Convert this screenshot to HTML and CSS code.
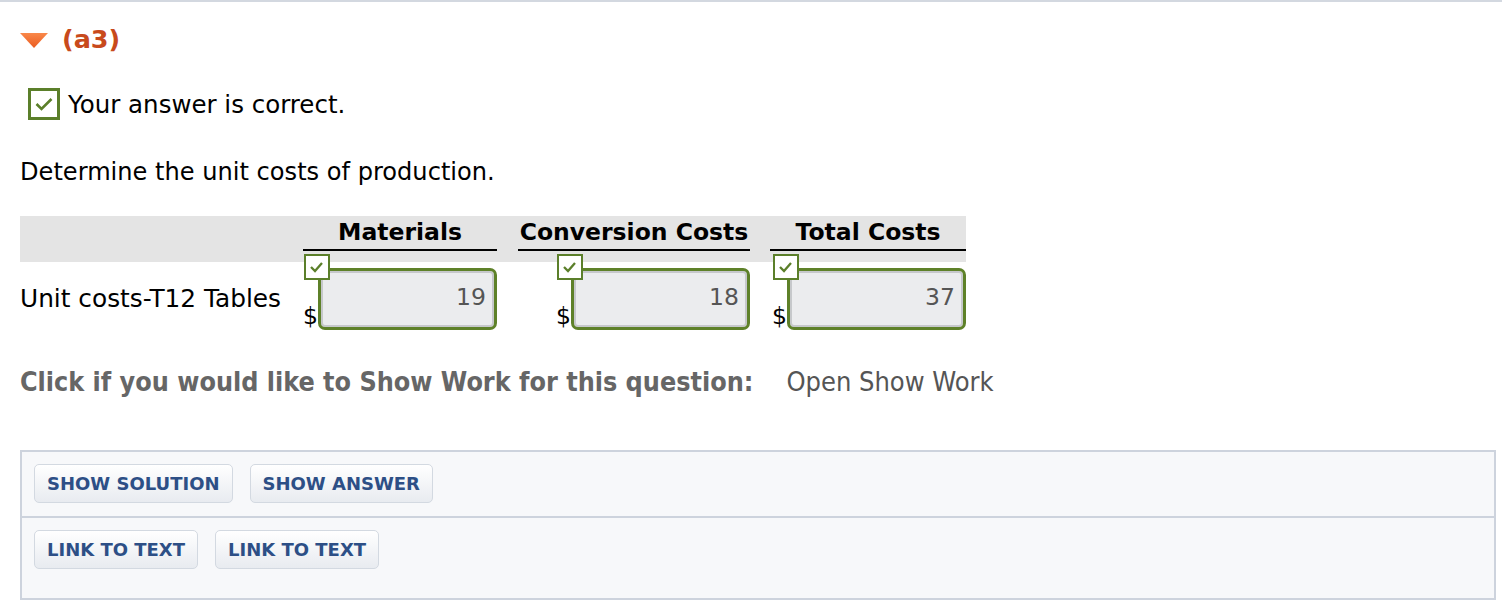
FILE: index.html
```html
<!DOCTYPE html>
<html>
<head>
<meta charset="utf-8">
<link rel="stylesheet" href="styles.css">
</head>
<body>
<div class="page">
  <div class="part-head">
    <svg class="toggle" width="28" height="15" viewBox="0 0 28 15">
      <defs>
        <linearGradient id="og" x1="0" y1="0" x2="0" y2="1">
          <stop offset="0" stop-color="#f9884a"/>
          <stop offset="1" stop-color="#ea5b1f"/>
        </linearGradient>
      </defs>
      <polygon points="0,0 28,0 14,15" fill="url(#og)"/>
    </svg>
    <span class="part-label">(a3)</span>
  </div>

  <div class="correct">
    <span class="check big">
      <svg width="26" height="26" viewBox="0 0 26 26"><polyline points="5.5,13 10.5,18 20.5,8" fill="none" stroke="#5b7f2a" stroke-width="2.6"/></svg>
    </span>
    <span>Your answer is correct.</span>
  </div>

  <p class="prompt">Determine the unit costs of production.</p>

  <div class="grid">
    <div class="head-band">
      <div class="hcell"></div>
      <div class="hcell col"><span class="hlabel w-mat">Materials</span></div>
      <div class="hcell col"><span class="hlabel w-conv">Conversion Costs</span></div>
      <div class="hcell col"><span class="hlabel w-tot">Total Costs</span></div>
    </div>
    <div class="body-row">
      <div class="row-label">Unit costs-T12 Tables</div>
      <div class="cell">
        <div class="field">
          <span class="check small"><svg width="22" height="22" viewBox="0 0 22 22"><polyline points="5,11 9,15 16,7" fill="none" stroke="#5b7f2a" stroke-width="2.3"/></svg></span>
          <span class="dollar">$</span><span class="input">19</span>
        </div>
      </div>
      <div class="cell">
        <div class="field">
          <span class="check small"><svg width="22" height="22" viewBox="0 0 22 22"><polyline points="5,11 9,15 16,7" fill="none" stroke="#5b7f2a" stroke-width="2.3"/></svg></span>
          <span class="dollar">$</span><span class="input">18</span>
        </div>
      </div>
      <div class="cell">
        <div class="field">
          <span class="check small"><svg width="22" height="22" viewBox="0 0 22 22"><polyline points="5,11 9,15 16,7" fill="none" stroke="#5b7f2a" stroke-width="2.3"/></svg></span>
          <span class="dollar">$</span><span class="input">37</span>
        </div>
      </div>
    </div>
  </div>

  <div class="showwork">
    <span class="sw-label">Click if you would like to Show Work for this question:</span>
    <span class="sw-link">Open Show Work</span>
  </div>

  <div class="panel">
    <div class="panel-row">
      <span class="btn">SHOW SOLUTION</span>
      <span class="btn">SHOW ANSWER</span>
    </div>
    <div class="panel-row last">
      <span class="btn">LINK TO TEXT</span>
      <span class="btn">LINK TO TEXT</span>
    </div>
  </div>
</div>
</body>
</html>
```

FILE: styles.css
```css
html, body {
  margin: 0;
  padding: 0;
  background: #ffffff;
  overflow: hidden;
}
body {
  font-family: "DejaVu Sans", Verdana, sans-serif;
  font-size: 24.5px;
  color: #000;
  border-top: 2px solid #d3d8e0;
}
.page {
  padding-left: 20px;
  width: 1476px;
}
.part-head {
  display: flex;
  align-items: center;
  height: 30px;
  margin-top: 22px;
}
.toggle {
  display: block;
  margin-top: 2px;
}
.part-label {
  margin-left: 14px;
  color: #c84a1c;
  font-weight: bold;
  font-size: 25.5px;
}
.correct {
  display: flex;
  align-items: center;
  margin-top: 34px;
  margin-left: 8px;
  height: 32px;
  gap: 8px;
}
.check {
  box-sizing: border-box;
  display: flex;
  align-items: center;
  justify-content: center;
  background: #fff;
  border: solid #5b7f2a;
}
.check.big {
  width: 32px;
  height: 32px;
  border-width: 3px;
}
.prompt {
  margin: 37px 0 0 0;
  line-height: 30px;
  height: 30px;
  font-size: 24.1px;
}
.grid {
  margin-top: 29px;
  width: 946px;
}
.head-band {
  display: grid;
  grid-template-columns: 283px 194px 253px 216px;
  background: #e4e4e4;
  height: 46px;
  font-size: 23.5px;
}
.hcell {
  height: 35px;
}
.col {
  display: flex;
  justify-content: flex-end;
}
.hlabel {
  box-sizing: border-box;
  display: block;
  height: 35px;
  line-height: 33px;
  text-align: center;
  font-weight: bold;
  border-bottom: 2px solid #000;
}
.w-mat { width: 194px; }
.w-conv { width: 232px; }
.w-tot { width: 196px; }
.body-row {
  display: grid;
  grid-template-columns: 283px 194px 253px 216px;
  padding-top: 6px;
  align-items: center;
}
.row-label {
  line-height: 30px;
  font-size: 24.8px;
}
.cell {
  display: flex;
  justify-content: flex-end;
}
.field {
  position: relative;
  display: flex;
  align-items: flex-end;
}
.check.small {
  position: absolute;
  left: 1px;
  top: -14px;
  width: 26px;
  height: 26px;
  border-width: 2px;
  z-index: 2;
}
.dollar {
  width: 15px;
  line-height: 24px;
  margin-bottom: 2px;
  font-size: 23.5px;
}
.input {
  box-sizing: border-box;
  width: 179px;
  height: 62px;
  border: 3px solid #5e8129;
  border-radius: 7px;
  box-shadow: inset 0 0 0 2px #c6c8cb;
  background: #ebecee;
  color: #555;
  text-align: right;
  padding-right: 8px;
  line-height: 53px;
  font-size: 23.5px;
}
.showwork {
  margin-top: 37px;
  height: 30px;
  line-height: 30px;
  display: flex;
  gap: 33px;
}
.sw-label {
  font-family: "DejaVu Sans Condensed", "DejaVu Sans", sans-serif;
  font-stretch: condensed;
  font-weight: bold;
  font-size: 26.7px;
  color: #666;
}
.sw-link {
  font-family: "DejaVu Sans Condensed", "DejaVu Sans", sans-serif;
  font-stretch: condensed;
  font-size: 27px;
  color: #555;
}
.panel {
  box-sizing: border-box;
  margin-top: 53px;
  width: 1476px;
  height: 150px;
  border: 2px solid #cdd3dd;
  background: #f7f8fa;
}
.panel-row {
  display: flex;
  gap: 17px;
  padding: 12px 0 0 12px;
  height: 66px;
  box-sizing: border-box;
  border-bottom: 2px solid #cdd3dd;
}
.panel-row.last {
  border-bottom: none;
  height: 80px;
}
.btn {
  box-sizing: border-box;
  display: inline-flex;
  align-items: center;
  height: 39px;
  padding: 0 12px;
  border: 1px solid #d3d9e1;
  border-radius: 5px;
  background: linear-gradient(#ffffff, #e8ebf0);
  color: #2d4f86;
  font-weight: bold;
  font-size: 18px;
}
```
